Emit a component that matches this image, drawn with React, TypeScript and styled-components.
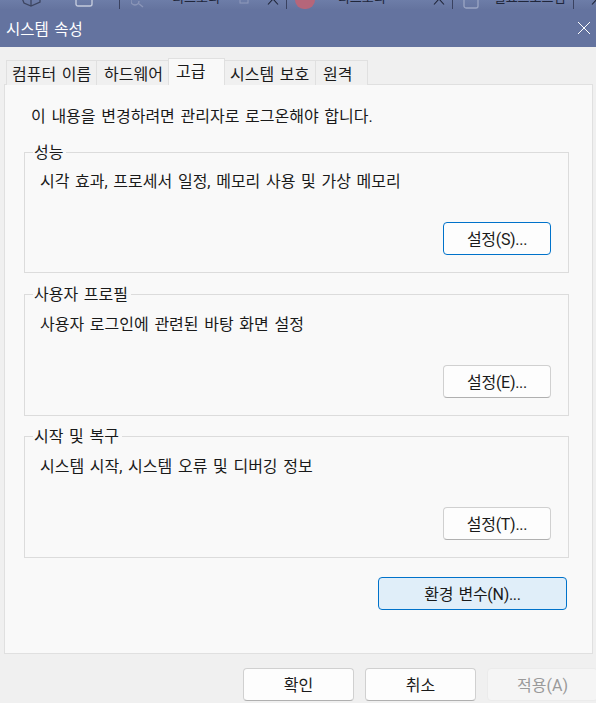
import styled, { createGlobalStyle } from "styled-components";

const GlobalStyle = createGlobalStyle`
  html, body {
    margin: 0;
    padding: 0;
    background: #f0f0f0;
  }
  * {
    box-sizing: border-box;
  }
`;

const tabs = [
  { label: "컴퓨터 이름", width: 91, pad: 5 },
  { label: "하드웨어", width: 73, pad: 7 },
  { label: "고급", width: 57, pad: 7 },
  { label: "시스템 보호", width: 92, pad: 5 },
  { label: "원격", width: 53, pad: 7 },
];

const groups = [
  { title: "성능", text: "시각 효과, 프로세서 일정, 메모리 사용 및 가상 메모리", button: "설정(S)...", focused: true },
  { title: "사용자 프로필", text: "사용자 로그인에 관련된 바탕 화면 설정", button: "설정(E)...", focused: false },
  { title: "시작 및 복구", text: "시스템 시작, 시스템 오류 및 디버깅 정보", button: "설정(T)...", focused: false },
];

const StripX = ({ left }: { left: number }) => (
  <StripIcon $left={left} $top>
    <svg width="12" height="5" viewBox="0 0 12 5">
      <path d="M6 -1L1 4.5M6 -1l5 5.5" stroke="#20263a" strokeWidth="1.1" fill="none" />
    </svg>
  </StripIcon>
);

export default function App() {
  return (
    <>
      <GlobalStyle />
      <Dialog>
        <TopStrip>
          <StripIcon $left={22}>
            <svg width="20" height="9" viewBox="0 0 20 9">
              <path d="M0 -2l2 5 7 3 9-4V-2M9 6V0" stroke="#3d4560" strokeWidth="1.3" fill="none" />
            </svg>
          </StripIcon>
          <StripIcon $left={33}>
            <svg width="18" height="9" viewBox="0 0 18 9">
              <rect x="1" y="-6" width="16" height="12" rx="2" stroke="#c3cadc" strokeWidth="1.4" fill="none" />
            </svg>
          </StripIcon>
          <StripDivider $left={26} />
          <StripIcon $left={11}>
            <svg width="14" height="9" viewBox="0 0 14 9">
              <path d="M4 -3a4 4 0 1 0 4 4M7 3l5 4" stroke="#8b96b8" strokeWidth="1.4" fill="none" />
            </svg>
          </StripIcon>
          <StripText $left={27}>티스토리</StripText>
          <StripIcon $left={19}>
            <svg width="10" height="9" viewBox="0 0 10 9">
              <rect x="1" y="-4" width="8" height="7" stroke="#8f9abb" strokeWidth="1" fill="none" />
            </svg>
          </StripIcon>
          <StripX left={18} />
          <StripDivider $left={7} />
          <StripBadge $left={8} />
          <StripText $left={23}>티스토리</StripText>
          <StripX left={47} />
          <StripDivider $left={7} />
          <StripIcon $left={10}>
            <svg width="16" height="9" viewBox="0 0 16 9">
              <rect x="1" y="-6" width="14" height="14" rx="2" stroke="#9aa5c3" strokeWidth="1.3" fill="none" />
            </svg>
          </StripIcon>
          <StripText $left={15}>필요프로그램</StripText>
          <StripDivider $left={8} />
          <StripX left={17} />
        </TopStrip>
        <TitleBar>
          <Title>시스템 속성</Title>
          <svg width="14" height="14" viewBox="0 0 14 14">
            <path d="M1 1l12 12M13 1L1 13" stroke="#fff" strokeWidth="1" fill="none" />
          </svg>
        </TitleBar>
        <Body>
          <TabRow>
            {tabs.map((t) => (
              <Tab key={t.label} $active={t.label === "고급"} $width={t.width} $pad={t.pad}>
                {t.label}
              </Tab>
            ))}
          </TabRow>
          <Panel>
            <Notice>이 내용을 변경하려면 관리자로 로그온해야 합니다.</Notice>
            {groups.map((g) => (
              <Group key={g.title} $compact={g.focused}>
                <GroupTitle>{g.title}</GroupTitle>
                <GroupText>{g.text}</GroupText>
                <GroupFooter>
                  <Button $focused={g.focused}>{g.button}</Button>
                </GroupFooter>
              </Group>
            ))}
            <EnvRow>
              <EnvButton>환경 변수(N)...</EnvButton>
            </EnvRow>
          </Panel>
          <Footer>
            <FooterButton>확인</FooterButton>
            <FooterButton>취소</FooterButton>
            <FooterButton $disabled>적용(A)</FooterButton>
          </Footer>
        </Body>
      </Dialog>
    </>
  );
}

const Dialog = styled.div`
  width: 596px;
  height: 703px;
  overflow: hidden;
  display: flex;
  flex-direction: column;
  font-family: Roboto, "Noto Sans CJK KR", sans-serif;
  font-size: 16px;
  word-spacing: 1.7px;
  color: #1a1a1a;
`;

const TopStrip = styled.div`
  height: 9px;
  flex-shrink: 0;
  background: linear-gradient(#6d7da8, #65749f);
  display: flex;
  align-items: flex-end;
  overflow: hidden;
`;

const StripIcon = styled.div<{ $left: number; $top?: boolean }>`
  margin-left: ${(p) => p.$left}px;
  height: ${(p) => (p.$top ? "5px" : "9px")};
  align-self: flex-start;
  display: flex;
  flex-shrink: 0;
`;

const StripDivider = styled.div<{ $left: number }>`
  margin-left: ${(p) => p.$left}px;
  width: 1px;
  height: 9px;
  flex-shrink: 0;
  background: #3a4260;
`;

const StripText = styled.div<{ $left: number }>`
  margin-left: ${(p) => p.$left}px;
  font-size: 13px;
  line-height: 9px;
  height: 9px;
  color: #20263a;
  white-space: nowrap;
  flex-shrink: 0;
  transform: translateY(-7px);
`;

const StripBadge = styled.div<{ $left: number }>`
  margin-left: ${(p) => p.$left}px;
  width: 20px;
  height: 9px;
  flex-shrink: 0;
  border-radius: 0 0 10px 10px;
  background: #b5667a;
`;

const TitleBar = styled.div`
  height: 38px;
  flex-shrink: 0;
  background: #64739f;
  display: flex;
  align-items: center;
  justify-content: space-between;
  padding: 0 5px 0 6px;
`;

const Title = styled.div`
  color: #fff;
  font-size: 15.5px;
`;

const Body = styled.div`
  flex: 1;
  background: #f0f0f0;
  display: flex;
  flex-direction: column;
  padding: 11px 0 0 4px;
`;

const TabRow = styled.div`
  display: flex;
  height: 27px;
  padding-left: 2px;
  align-items: flex-end;
`;

const Tab = styled.div<{ $active?: boolean; $width: number; $pad: number }>`
  width: ${(p) => p.$width}px;
  height: ${(p) => (p.$active ? "27px" : "25px")};
  padding: ${(p) => `0 0 ${p.$active ? 5 : 1}px ${p.$pad}px`};
  display: flex;
  align-items: center;
  background: ${(p) => (p.$active ? "#f9f9f9" : "#f0f0f0")};
  border: 1px solid #e0e0e0;
  border-bottom: none;
  margin-right: -1px;
  white-space: nowrap;
  position: relative;
  z-index: ${(p) => (p.$active ? 1 : 0)};
`;

const Panel = styled.div`
  height: 570px;
  width: 589px;
  background: #f9f9f9;
  border: 1px solid #e0e0e0;
  padding: 22px 22px 0 19px;
  display: flex;
  flex-direction: column;
  margin-top: -1px;
`;

const Notice = styled.div`
  padding-left: 7px;
  height: 20px;
  line-height: 20px;
  margin-bottom: 25px;
`;

const Group = styled.div<{ $compact?: boolean }>`
  position: relative;
  width: 545px;
  height: ${(p) => (p.$compact ? "121px" : "122px")};
  border: 1px solid #dcdcdc;
  padding: ${(p) => (p.$compact ? "19px" : "20px")} 15px 0;
  margin-bottom: ${(p) => (p.$compact ? "21px" : "20px")};
  display: flex;
  flex-direction: column;
`;

const GroupTitle = styled.div`
  position: absolute;
  top: -10px;
  left: 8px;
  padding: 0 3px 0 1px;
  line-height: 20px;
  background: #f9f9f9;
`;

const GroupText = styled.div`
  line-height: 20px;
`;

const GroupFooter = styled.div`
  margin-top: 30px;
  display: flex;
  justify-content: flex-end;
  padding-right: 2px;
`;

const Button = styled.div<{ $focused?: boolean }>`
  width: 108px;
  height: 33px;
  padding-bottom: 2px;
  letter-spacing: -0.3px;
  display: flex;
  align-items: center;
  justify-content: center;
  background: #fdfdfd;
  border: 1px solid ${(p) => (p.$focused ? "#0072ca" : "#d0d0d0")};
  border-bottom-color: ${(p) => (p.$focused ? "#0072ca" : "#b0b0b0")};
  border-radius: 4px;
`;

const EnvRow = styled.div`
  display: flex;
  justify-content: flex-end;
  width: 543px;
  margin-top: -1px;
`;

const EnvButton = styled.div`
  width: 189px;
  height: 33px;
  padding-bottom: 2px;
  letter-spacing: -0.3px;
  display: flex;
  align-items: center;
  justify-content: center;
  background: #e0eef9;
  border: 1px solid #0072ca;
  border-radius: 4px;
`;

const Footer = styled.div`
  display: flex;
  gap: 11px;
  padding: 14px 0 0 239px;
`;

const FooterButton = styled.div<{ $disabled?: boolean }>`
  width: 111px;
  height: 33px;
  padding-bottom: 2px;
  flex-shrink: 0;
  display: flex;
  align-items: center;
  justify-content: center;
  background: ${(p) => (p.$disabled ? "#f5f5f5" : "#fdfdfd")};
  color: ${(p) => (p.$disabled ? "#9a9a9a" : "#1a1a1a")};
  border: 1px solid ${(p) => (p.$disabled ? "#ebebeb" : "#d0d0d0")};
  border-bottom-color: ${(p) => (p.$disabled ? "#ebebeb" : "#b0b0b0")};
  border-radius: 4px;
`;
